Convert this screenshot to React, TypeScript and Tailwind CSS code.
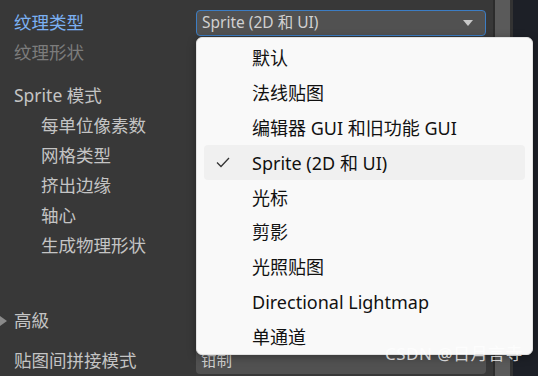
import React from "react";

const FONT = '"Noto Sans", "Noto Sans CJK SC", sans-serif';

const menuItems = [
  "默认",
  "法线贴图",
  "编辑器 GUI 和旧功能 GUI",
  "Sprite (2D 和 UI)",
  "光标",
  "剪影",
  "光照贴图",
  "Directional Lightmap",
  "单通道",
];

function Field({ text, active }: { text: string; active?: boolean }) {
  return (
    <div
      className={`flex items-center justify-between w-[290px] h-[26px] rounded-[4px] bg-[#515151] px-[5px] ${
        active ? "border border-[#3c7dc4]" : ""
      }`}
    >
      <span className="text-[15.5px] text-[#d0d0d0] leading-none">{text}</span>
      {active && (
        <svg width="12" height="8" viewBox="0 0 12 8" className="mr-[6px]">
          <path d="M1 1h10L6 7z" fill="#c8c8c8" />
        </svg>
      )}
    </div>
  );
}

function Row({
  label,
  className = "",
  labelClass = "text-[#c4c4c4]",
  indent,
  children,
}: {
  label: string;
  className?: string;
  labelClass?: string;
  indent?: boolean;
  children?: React.ReactNode;
}) {
  return (
    <div className={`flex items-center h-[30px] ${className}`}>
      <div className={`w-[196px] shrink-0 text-[17.5px] leading-none ${indent ? "pl-[41px]" : "pl-[14px]"} ${labelClass}`}>
        {label}
      </div>
      {children}
    </div>
  );
}

export default function App() {
  return (
    <div
      className="relative w-[538px] h-[376px] overflow-hidden bg-[#383838] flex"
      style={{ fontFamily: FONT }}
    >
      {/* 属性面板 */}
      <div className="w-[493px] flex flex-col">
        <div className="flex items-center h-[26px] mt-[10px]">
          <div className="w-[196px] shrink-0 pl-[14px] text-[17.5px] leading-none text-[#7bb0f2]">纹理类型</div>
          <Field text="Sprite (2D 和 UI)" active />
        </div>
        <Row label="纹理形状" className="mt-[2px]" labelClass="text-[#7c7c7c]" />
        <Row label="Sprite 模式" className="mt-[13px]" />
        <Row label="每单位像素数" indent />
        <Row label="网格类型" indent />
        <Row label="挤出边缘" indent />
        <Row label="轴心" indent />
        <Row label="生成物理形状" indent />
        <div className="flex items-center h-[30px] mt-[45px]">
          <svg width="8" height="12" viewBox="0 0 8 12" className="shrink-0">
            <path d="M0 1l7 5-7 5z" fill="#8a8a8a" />
          </svg>
          <span className="pl-[6px] text-[17.5px] leading-none text-[#c4c4c4]">高級</span>
        </div>
        <div className="flex items-center h-[26px] mt-[12px]">
          <div className="w-[196px] shrink-0 pl-[14px] text-[17.5px] leading-none text-[#c4c4c4]">贴图间拼接模式</div>
          <Field text="钳制" />
        </div>
      </div>

      {/* 滚动条与右侧面板 */}
      <div className="w-[2px] bg-[#2c2c2c]" />
      <div className="w-[15px] bg-[#5a5a5a]" />
      <div className="w-[3px] bg-[#333333]" />
      <div className="flex-1 bg-[#1d2027]" />

      {/* 下拉菜单 */}
      <div className="absolute left-[196px] top-[37px] w-[337px] h-[318px] rounded-[6px] bg-[#f9f9f9] border border-[#e2e2e2] shadow-[0_2px_8px_rgba(0,0,0,0.35)] pt-[3px] px-[7px] flex flex-col">
        {menuItems.map((item) => {
          const selected = item === "Sprite (2D 和 UI)";
          return (
            <div
              key={item}
              className={`relative flex items-center h-[35px] rounded-[4px] pl-[48px] text-[18px] leading-none text-[#111111] ${
                selected ? "bg-[#f0f0f0]" : ""
              }`}
            >
              {selected && (
                <svg width="14" height="11" viewBox="0 0 14 11" className="absolute left-[12px] top-[12px]">
                  <path d="M1 5.5l4 4L13 1" stroke="#333" strokeWidth="1.3" fill="none" />
                </svg>
              )}
              {item}
            </div>
          );
        })}
      </div>

      {/* 水印 */}
      <div className="absolute left-[385px] top-[345px] text-[17px] leading-none text-white/75 tracking-[0.5px]">
        CSDN @日月言寺
      </div>
    </div>
  );
}
